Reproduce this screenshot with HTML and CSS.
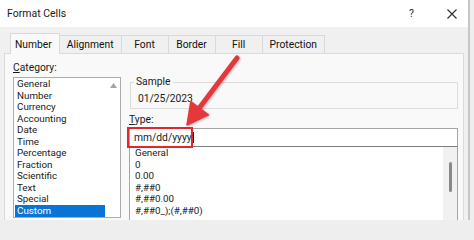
FILE: index.html
```html
<!DOCTYPE html>
<html>
<head>
<meta charset="utf-8">
<link rel="stylesheet" href="styles.css">
</head>
<body>
<div class="dialog">
  <div class="titlebar">
    <span class="title">Format Cells</span>
    <span class="help">?</span>
    <svg class="close" width="10" height="10" viewBox="0 0 10 10"><path d="M0.5 0.5 L9.5 9.5 M9.5 0.5 L0.5 9.5" stroke="#2b2b2b" stroke-width="1.1" fill="none"/></svg>
  </div>
  <div class="content">
    <div class="tabs">
      <div class="tab selected">Number</div>
      <div class="tab">Alignment</div>
      <div class="tab">Font</div>
      <div class="tab">Border</div>
      <div class="tab">Fill</div>
      <div class="tab">Protection</div>
    </div>
    <div class="panel">
      <div class="col-left">
        <div class="label"><u>C</u>ategory:</div>
        <div class="listbox">
          <div class="items">
            <div class="item">General</div>
            <div class="item">Number</div>
            <div class="item">Currency</div>
            <div class="item">Accounting</div>
            <div class="item">Date</div>
            <div class="item">Time</div>
            <div class="item">Percentage</div>
            <div class="item">Fraction</div>
            <div class="item">Scientific</div>
            <div class="item">Text</div>
            <div class="item">Special</div>
            <div class="item active">Custom</div>
          </div>
          <div class="vscroll">
            <svg class="up" width="7" height="5" viewBox="0 0 7 5"><path d="M3.5 0 L7 5 L0 5 Z" fill="#a3a3a3"/></svg>
          </div>
        </div>
      </div>
      <div class="col-right">
        <fieldset class="sample">
          <legend>Sample</legend>
          <div class="sample-value">01/25/2023</div>
        </fieldset>
        <div class="label type-label"><u>T</u>ype:</div>
        <div class="input">mm/dd/yyyy<span class="caret"></span></div>
        <div class="typelist">
          <div class="titems">
            <div class="item">General</div>
            <div class="item">0</div>
            <div class="item">0.00</div>
            <div class="item">#,##0</div>
            <div class="item">#,##0.00</div>
            <div class="item">#,##0_);(#,##0)</div>
          </div>
          <div class="track"><div class="thumb"></div></div>
        </div>
      </div>
    </div>
  </div>
  <div class="redbox"></div>
  <svg class="arrow" width="474" height="220" viewBox="0 0 474 220">
    <line x1="237" y1="58" x2="197" y2="111" stroke="#e5383c" stroke-width="5" stroke-linecap="round"/>
    <polygon points="187,125 190.8,101.6 208.4,114.8" fill="#e5383c" stroke="#e5383c" stroke-width="1.5" stroke-linejoin="round"/>
  </svg>
</div>
</body>
</html>
```
FILE: styles.css
```css
* { box-sizing: border-box; }
html, body { margin: 0; padding: 0; }
body {
  background: #eeeeee;
  font-family: Roboto, "Noto Sans", sans-serif;
  font-size: 10px;
  color: #1a1a1a;
  width: 474px;
  height: 220px;
  overflow: hidden;
}
.dialog {
  position: relative;
  width: 470px;
  height: 220px;
  background: #f0f0f0;
  border-right: 2px solid #c6c6c6;
  overflow: hidden;
}
.titlebar {
  height: 27px;
  background: #ffffff;
  display: flex;
  align-items: center;
  padding-left: 7px;
}
.title { font-size: 10.5px; color: #1a1a1a; }
.help {
  margin-left: auto;
  font-size: 10.5px;
  color: #2b2b2b;
  margin-right: 33px;
}
.close { margin-right: 11px; }
.content {
  padding: 6px 0 0 4px;
}
.tabs {
  display: flex;
  align-items: flex-end;
  height: 20px;
  padding-left: 6px;
}
.tab {
  height: 18px;
  min-width: 48px;
  padding: 0 7px;
  margin-left: -1px;
  border: 1px solid #d9d9d9;
  border-bottom: none;
  background: #f0f0f0;
  display: flex;
  align-items: center;
  justify-content: center;
  line-height: 12px;
  font-size: 10.3px;
  color: #111;
}
.tab.selected {
  height: 21px;
  margin-bottom: -1px;
  margin-left: 0;
  padding: 1px 7px 0 4px;
  background: #f9f9f9;
  position: relative;
  z-index: 1;
}
.panel {
  width: 460px;
  height: 200px;
  border: 1px solid #dadada;
  background: #f9f9f9;
  display: grid;
  grid-template-columns: 108px 1fr;
  column-gap: 8px;
  padding: 7px 5px 0 8px;
}
.label { line-height: 14px; font-size: 10.3px; }
.label u { text-decoration-thickness: 1px; text-underline-offset: 1px; }
.listbox {
  margin-top: 2px;
  height: 141px;
  border: 1px solid #ababab;
  background: #ffffff;
  display: flex;
}
.items {
  width: 91px;
  padding-left: 1px;
}
.item {
  font-size: 9.8px;
  line-height: 11.5px;
  height: 11.5px;
  padding-left: 2px;
  white-space: nowrap;
}
.item.active {
  background: #0a74d6;
  color: #ffffff;
  height: 12.5px;
  line-height: 12.5px;
}
.vscroll {
  flex: 1;
  display: flex;
  justify-content: center;
  padding-top: 5px;
  padding-left: 2px;
}
.col-right {
  padding-top: 15px;
  min-width: 0;
}
.sample {
  margin: 0 0 0 1px;
  padding: 5px 7px 3px 7px;
  border: 1px solid #dcdcdc;
  min-width: 0;
}
.sample legend {
  padding: 0 2px;
  margin-left: -4px;
  line-height: 12px;
  font-size: 10.3px;
}
.sample-value { line-height: 12px; font-size: 10.3px; }
.type-label { margin-top: 5px; line-height: 12px; }
.input {
  margin-top: 2px;
  height: 19px;
  border: 1px solid #a6a6a6;
  border-bottom-color: #7e7e7e;
  background: #ffffff;
  padding-left: 4px;
  display: flex;
  align-items: center;
  line-height: 12px;
  font-size: 10.3px;
}
.caret {
  display: inline-block;
  width: 1px;
  height: 11px;
  background: #000;
  margin-left: 1px;
}
.typelist {
  margin-top: -1px;
  height: 80px;
  border: 1px solid #a6a6a6;
  border-top-color: #7e7e7e;
  background: #ffffff;
  display: flex;
}
.titems {
  flex: 1;
  padding-left: 3px;
  color: #222;
}
.track {
  width: 14px;
  background: #f1f1f1;
  display: flex;
  justify-content: center;
  padding-top: 15px;
}
.thumb {
  width: 3px;
  height: 30px;
  border-radius: 2px;
  background: #8a8a8a;
}
.redbox {
  position: absolute;
  left: 127px;
  top: 127px;
  width: 66px;
  height: 21px;
  border: 2px solid #e0262c;
}
.arrow {
  position: absolute;
  left: 0;
  top: 0;
  pointer-events: none;
  filter: drop-shadow(1px 1px 1px rgba(0,0,0,0.25));
}
```
